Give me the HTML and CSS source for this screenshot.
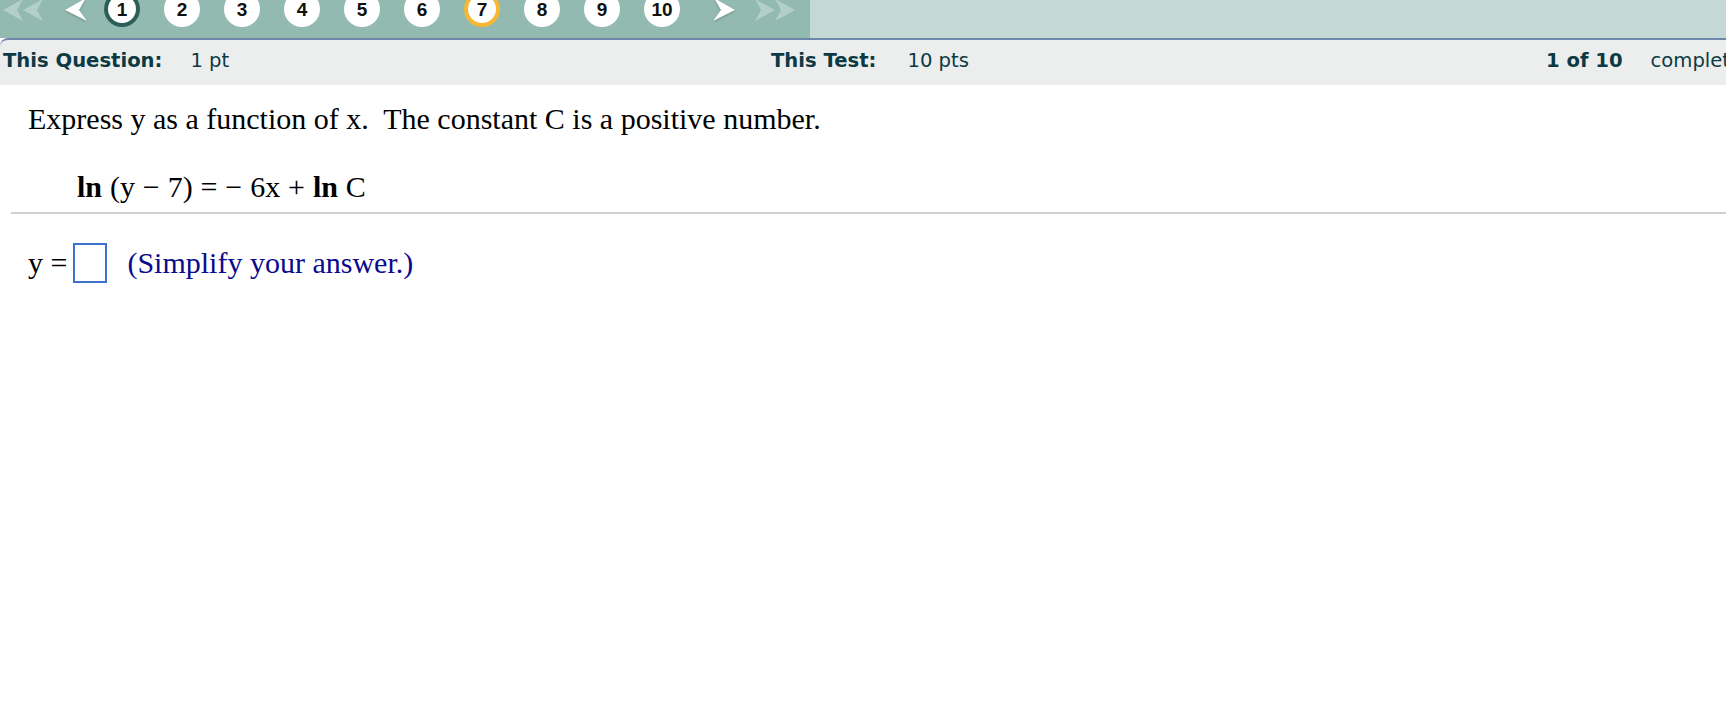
FILE: index.html
```html
<!DOCTYPE html>
<html>
<head>
<meta charset="utf-8">
<link rel="stylesheet" href="styles.css">
</head>
<body>
<div class="topnav">
  <div class="nav-main">
    <span class="arrow dbl faded">
      <svg width="42" height="22" viewBox="0 0 42 22"><polygon points="0,10 20,-1 14,10 20,21" /><polygon points="20,10 40,-1 34,10 40,21" /></svg>
    </span>
    <span class="arrow single">
      <svg width="22" height="22" viewBox="0 0 22 22"><polygon points="0,10 21,-2 14,10 22,21" /></svg>
    </span>
    <div class="qnums">
      <span class="qnum current">1</span>
      <span class="qnum">2</span>
      <span class="qnum">3</span>
      <span class="qnum">4</span>
      <span class="qnum">5</span>
      <span class="qnum">6</span>
      <span class="qnum marked">7</span>
      <span class="qnum">8</span>
      <span class="qnum">9</span>
      <span class="qnum">10</span>
    </div>
    <span class="arrow single right">
      <svg width="22" height="22" viewBox="0 0 22 22"><polygon points="22,10 1,-2 8,10 0,21" /></svg>
    </span>
    <span class="arrow dbl faded right2">
      <svg width="42" height="22" viewBox="0 0 42 22"><polygon points="20,10 0,-1 6,10 0,21" /><polygon points="40,10 20,-1 26,10 20,21" /></svg>
    </span>
  </div>
  <div class="nav-rest"></div>
</div>

<div class="infobar">
  <div class="info-group g1"><span class="label">This Question:</span><span class="val">1 pt</span></div>
  <div class="info-group g2"><span class="label">This Test:</span><span class="val">10 pts</span></div>
  <div class="info-group g3"><span class="label">1 of 10</span><span class="val">complete</span></div>
</div>

<div class="question">
  <p class="prompt">Express y as a function of x.&nbsp; The constant C is a positive number.</p>
  <p class="equation"><b>ln</b> (y &minus; 7) = &minus; 6x + <b>ln</b> C</p>
</div>
<div class="divider"></div>
<div class="answer">
  <span class="ylabel">y =</span><span class="box"></span><span class="hint">(Simplify your answer.)</span>
</div>
</body>
</html>
```

FILE: styles.css
```css
html, body {
  margin: 0;
  padding: 0;
  background: #ffffff;
}
body {
  width: 1726px;
  height: 714px;
  overflow: hidden;
  font-family: "Liberation Serif", "Times New Roman", serif;
}

/* top navigation */
.topnav {
  display: flex;
  height: 38px;
  overflow: hidden;
}
.nav-main {
  width: 810px;
  flex: 0 0 810px;
  background: #93bab1;
  display: flex;
  align-items: flex-start;
  padding-left: 3px;
  box-sizing: border-box;
}
.nav-rest {
  flex: 1;
  background: #c4d9d5;
}
.arrow {
  display: block;
  height: 22px;
}
.arrow svg {
  display: block;
  overflow: visible;
}
.arrow polygon {
  fill: #ffffff;
}
.arrow.faded polygon {
  fill: #b2cfc8;
}
.arrow.single {
  margin-left: 20px;
}
.arrow.single polygon {
  filter: drop-shadow(0 1px 1px rgba(0,0,0,0.25));
}
.arrow.right {
  margin-left: 33px;
}
.arrow.right2 {
  margin-left: 20px;
}
.qnums {
  display: flex;
  gap: 24px;
  margin-left: 17px;
  margin-top: -9px;
}
.qnum {
  width: 36px;
  height: 36px;
  border-radius: 50%;
  background: #ffffff;
  box-sizing: border-box;
  display: flex;
  align-items: center;
  justify-content: center;
  font-family: "Liberation Sans", Arial, sans-serif;
  font-weight: bold;
  font-size: 19px;
  color: #111111;
  padding-top: 1px;
}
.qnum.current {
  border: 4px solid #2d5f58;
}
.qnum.marked {
  border: 4px solid #f7b733;
}

/* info bar */
.infobar {
  display: flex;
  background: #eceeed;
  border-top: 2px solid #6f87ad;
  border-top-left-radius: 8px;
  align-items: center;
  padding-bottom: 4px;
  height: 41px;
  white-space: nowrap;
  overflow: hidden;
  font-family: "DejaVu Sans", Verdana, sans-serif;
  font-size: 19.6px;
  color: #0c3a44;
}
.info-group {
  display: flex;
  flex: 0 0 auto;
}
.g1 {
  width: 771px;
  padding-left: 3px;
  box-sizing: border-box;
}
.g2 {
  width: 775px;
}
.label {
  font-weight: bold;
  margin-right: 28px;
}
.g2 .label {
  margin-right: 31px;
}
.val {
  font-weight: normal;
}

/* question */
.question {
  padding-left: 28px;
}
.prompt {
  margin: 0;
  padding-top: 12px;
  font-size: 30px;
  line-height: 44px;
  color: #000;
}
.equation {
  margin: 0;
  padding-left: 49px;
  padding-top: 24px;
  font-size: 30px;
  line-height: 44px;
  color: #000;
  word-spacing: 0.4px;
}
.divider {
  margin-left: 11px;
  height: 2px;
  background: #d0d0d0;
  margin-top: 3px;
}
.answer {
  display: flex;
  align-items: center;
  padding-left: 28px;
  padding-top: 27px;
  font-size: 30px;
  line-height: 44px;
}
.ylabel {
  color: #000;
}
.box {
  width: 34px;
  height: 40px;
  box-sizing: border-box;
  border: 2px solid #3d70c8;
  margin-left: 6px;
  margin-right: 20px;
}
.hint {
  color: #0a0a8c;
}
```
